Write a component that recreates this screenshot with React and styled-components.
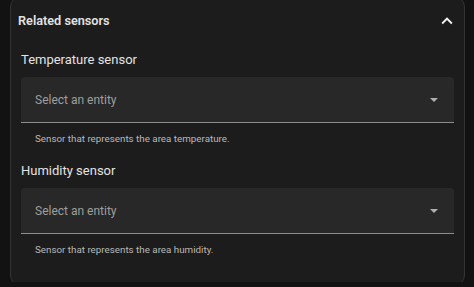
import React from "react"
import styled, { createGlobalStyle } from "styled-components"

const GlobalStyle = createGlobalStyle`
  html, body {
    margin: 0;
    padding: 0;
    background: #121212;
    font-family: Roboto, "Noto Sans", sans-serif;
    overflow: hidden;
  }
`

const Page = styled.div`
  width: 474px;
  height: 287px;
  padding: 0 9px 0 10px;
  box-sizing: border-box;
`

const Panel = styled.section`
  margin-top: -5px;
  border: 1px solid #333333;
  border-radius: 12px;
  background: #1c1c1c;
  padding: 0 10px 29px 10px;
`

const PanelHeader = styled.div`
  display: flex;
  align-items: center;
  justify-content: space-between;
  height: 48px;
  margin: 0 -4px 0 -3px;
  padding-top: 1px;
  box-sizing: border-box;
`

const PanelTitle = styled.h3`
  margin: 0;
  font-size: 12.7px;
  font-weight: 600;
  color: #e3e3e3;
`

const ToggleButton = styled.button`
  background: transparent;
  border: none;
  padding: 0;
  width: 22px;
  height: 22px;
  display: flex;
  align-items: center;
  justify-content: center;
  color: #f4f4f4;
  cursor: pointer;
`

const Field = styled.div`
  display: flex;
  flex-direction: column;
  margin-top: ${p => p.$first ? "6px" : "15px"};
`

const FieldLabel = styled.div`
  font-size: 13px;
  line-height: 20px;
  color: #e3e3e3;
`

const SelectBox = styled.div`
  margin-top: 7px;
  height: 46px;
  box-sizing: border-box;
  background: #282828;
  border-bottom: 1px solid #8c8c8c;
  border-radius: 4px 4px 0 0;
  display: flex;
  align-items: center;
  justify-content: space-between;
  padding: 0 16px 0 14px;
`

const Placeholder = styled.span`
  font-size: 12px;
  color: #9f9f9f;
`

const HelperText = styled.div`
  padding: 9px 0 0 14px;
  font-size: 9.8px;
  line-height: 14px;
  color: #b8b8b8;
`

const ChevronUp = () => (
  <svg width="22" height="22" viewBox="0 0 24 24">
    <path d="M7.41 15.41 12 10.83l4.59 4.58L18 14l-6-6-6 6z" fill="currentColor" />
  </svg>
)

const ArrowDown = () => (
  <svg width="8" height="4" viewBox="0 0 8 4">
    <path d="M0 0 L4 4 L8 0 Z" fill="#b0b0b0" />
  </svg>
)

const sensors = [
  { label: "Temperature sensor", help: "Sensor that represents the area temperature." },
  { label: "Humidity sensor", help: "Sensor that represents the area humidity." },
]

const App = () => (
  <Page>
    <GlobalStyle />
    <Panel>
      <PanelHeader>
        <PanelTitle>Related sensors</PanelTitle>
        <ToggleButton type="button"><ChevronUp /></ToggleButton>
      </PanelHeader>
      {sensors.map((s, i) => (
        <Field key={s.label} $first={i === 0}>
          <FieldLabel>{s.label}</FieldLabel>
          <SelectBox>
            <Placeholder>Select an entity</Placeholder>
            <ArrowDown />
          </SelectBox>
          <HelperText>{s.help}</HelperText>
        </Field>
      ))}
    </Panel>
  </Page>
)

export default App
